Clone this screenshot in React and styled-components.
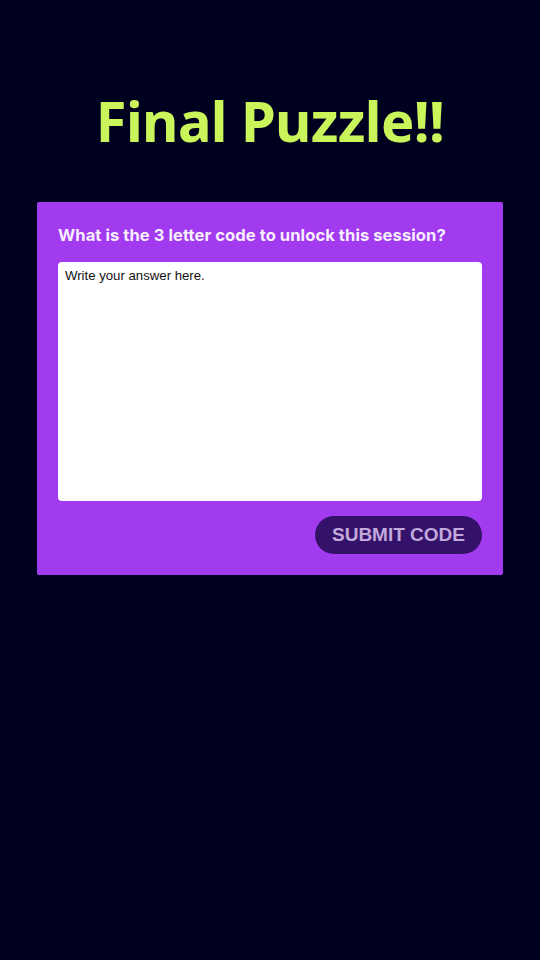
import React from "react";
import styled, { createGlobalStyle } from "styled-components";

const Global = createGlobalStyle`
  html, body { margin: 0; padding: 0; background: #00001f; }
  body { min-height: 960px; }
  * { box-sizing: border-box; }
`;

const Page = styled.div`
  min-height: 960px;
  background: #00001f;
  display: flex;
  flex-direction: column;
  align-items: center;
  padding-top: 82px;
`;

const Title = styled.h1`
  margin: 0;
  font-family: "Noto Sans", "Open Sans", sans-serif;
  font-weight: 700;
  font-size: 56px;
  line-height: 76px;
  color: #c9f55b;
  letter-spacing: -0.6px;
`;

const Card = styled.div`
  margin-top: 44px;
  width: 466px;
  background: #a23bf0;
  border-radius: 2px;
  padding: 22px 21px 21px 21px;
  display: flex;
  flex-direction: column;
`;

const Question = styled.div`
  font-family: "Inter", "Noto Sans", sans-serif;
  font-weight: 700;
  font-size: 16.6px;
  line-height: 22px;
  letter-spacing: 0.05px;
  color: #f7eefe;
`;

const Answer = styled.textarea`
  margin-top: 16px;
  width: 100%;
  height: 239px;
  border: none;
  border-radius: 4px;
  background: #ffffff;
  padding: 6px 7px;
  resize: none;
  font-family: "Liberation Sans", Arial, sans-serif;
  font-size: 13.2px;
  line-height: 16px;
  color: #111;
  &::placeholder { color: #111; opacity: 1; }
  outline: none;
`;

const Row = styled.div`
  margin-top: 15px;
  display: flex;
  justify-content: flex-end;
`;

const Submit = styled.button`
  height: 38px;
  padding: 0 17px;
  border: none;
  border-radius: 19px;
  background: #35126a;
  color: #c2a9dc;
  font-family: "Liberation Sans", Arial, sans-serif;
  font-size: 19px;
  font-weight: 700;
  cursor: pointer;
`;

export default function App() {
  return (
    <>
      <Global />
      <Page>
        <Title>Final Puzzle!!</Title>
        <Card>
          <Question>What is the 3 letter code to unlock this session?</Question>
          <Answer placeholder="Write your answer here." />
          <Row>
            <Submit>SUBMIT CODE</Submit>
          </Row>
        </Card>
      </Page>
    </>
  );
}
